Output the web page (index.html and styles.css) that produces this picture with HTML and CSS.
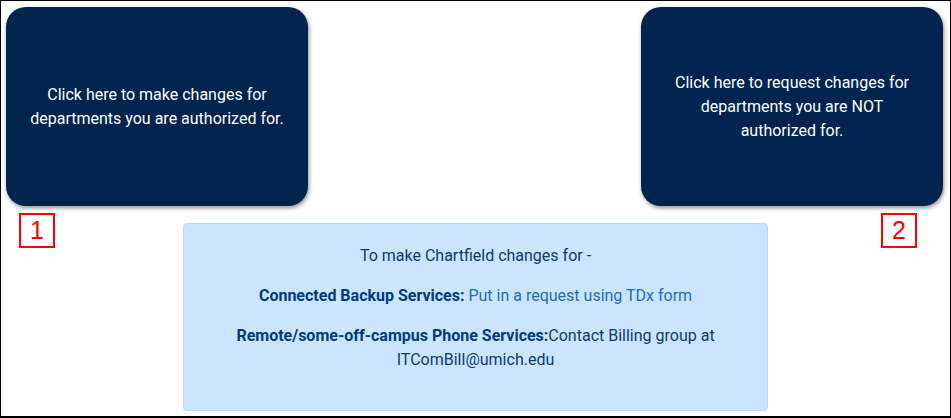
FILE: index.html
```html
<!DOCTYPE html>
<html>
<head>
<meta charset="utf-8">
<link rel="stylesheet" href="styles.css">
</head>
<body>
<div class="frame">
  <div class="cards">
    <div class="card-wrap">
      <a class="card card-wide" href="#">Click here to make changes for departments you are authorized for.</a>
      <span class="tag tag-1">1</span>
    </div>
    <div class="card-wrap">
      <a class="card card-narrow" href="#">Click here to request changes for departments you are NOT authorized for.</a>
      <span class="tag tag-2">2</span>
    </div>
  </div>
  <div class="info">
    <p>To make Chartfield changes for -</p>
    <p><strong>Connected Backup Services:</strong> <a class="link" href="#">Put in a request using TDx form</a></p>
    <p><strong>Remote/some-off-campus Phone Services:</strong>Contact Billing group at ITComBill@umich.edu</p>
  </div>
</div>
</body>
</html>
```

FILE: styles.css
```css
html, body {
  margin: 0;
  padding: 0;
  background: #ffffff;
}
.frame {
  box-sizing: border-box;
  width: 951px;
  height: 418px;
  border: 1px solid #000;
  border-bottom-width: 2px;
  font-family: Roboto, "Liberation Sans", sans-serif;
  font-size: 16px;
  line-height: 24px;
  overflow: hidden;
}
.cards {
  display: flex;
  justify-content: space-between;
  padding: 6px 7px 0 5px;
}
.card-wrap {
  position: relative;
}
.card {
  box-sizing: border-box;
  width: 302px;
  height: 199px;
  display: flex;
  align-items: center;
  justify-content: center;
  text-align: center;
  background: #00244d;
  color: #ffffff;
  text-decoration: none;
  border-radius: 20px;
  box-shadow: 1px 2px 4px rgba(0, 0, 0, 0.45);
}
.card-wide {
  padding: 0 18px;
}
.card-narrow {
  padding: 0 32px;
}
.tag {
  position: absolute;
  top: 206px;
  box-sizing: border-box;
  width: 36px;
  height: 35px;
  border: 2px solid #ff0000;
  color: #ff0000;
  font-family: "Liberation Sans", Arial, sans-serif;
  font-size: 25px;
  line-height: 31px;
  text-align: center;
}
.tag-1 {
  left: 13px;
}
.tag-2 {
  right: 26px;
}
.info {
  box-sizing: border-box;
  width: 585px;
  margin: 17px auto 0;
  padding: 20px 20px 22px;
  background: #cce5ff;
  border: 1px solid #b8daff;
  border-radius: 4px;
  color: #0b3a73;
  text-align: center;
}
.info p {
  margin: 0 0 16px;
}
.info strong {
  color: #003a80;
  font-weight: 700;
}
.link {
  color: #1f6cb8;
  text-decoration: none;
}
```
